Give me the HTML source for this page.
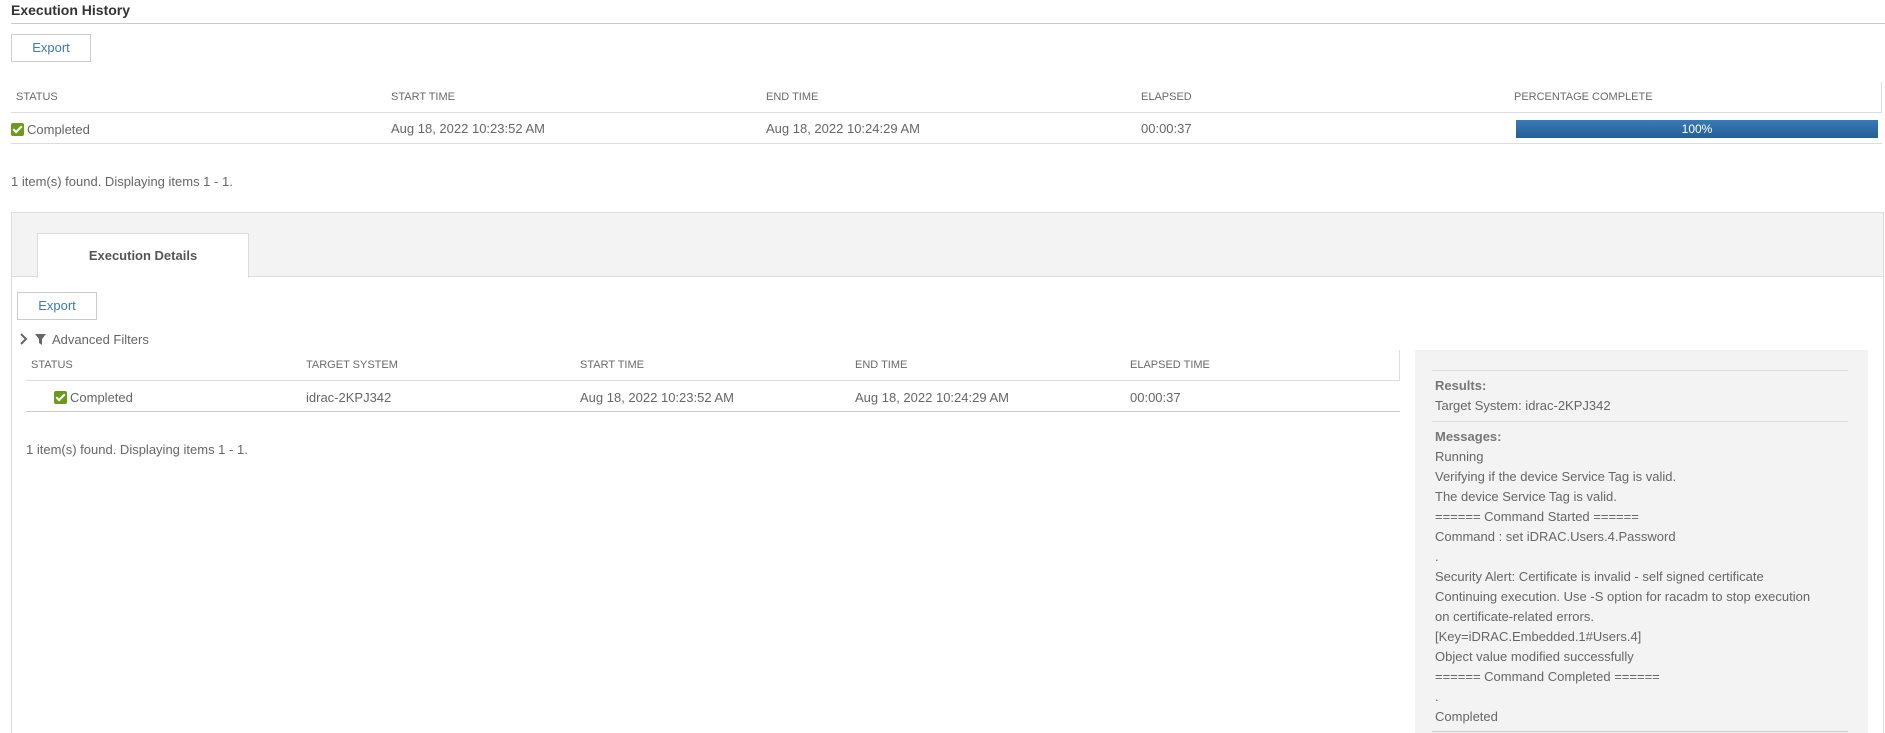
<!DOCTYPE html>
<html style="height:733px;overflow:hidden"><head><meta charset="utf-8"><style>
*{margin:0;padding:0;box-sizing:border-box}
body{width:1885px;height:733px;overflow:hidden;background:#fff;font-family:"Liberation Sans",sans-serif;color:#666;font-size:13px;position:relative}
.a{position:absolute;white-space:nowrap}
.h{font-size:11px;color:#6a6a6a;text-transform:uppercase}
.ln{position:absolute;height:1px;background:#ddd}
.btn{position:absolute;border:1px solid #ccc;background:#fff;color:#3d7bb0;font-size:13px;text-align:center}
.chk{display:inline-block;width:13px;height:13px;background:#6b9a1c;border-radius:2px;vertical-align:-2px;margin-right:3px;position:relative}
.chk:after{content:"";position:absolute;left:4px;top:1px;width:3px;height:7px;border:solid #fff;border-width:0 2px 2px 0;transform:rotate(45deg)}
.rp div{height:20px;line-height:20px}
</style></head><body>
<div class="a" style="left:11px;top:2px;font-size:14px;font-weight:bold;color:#333">Execution History</div>
<div class="ln" style="left:11px;top:23px;width:1874px;background:#ccc"></div>
<div class="btn" style="left:11px;top:34px;width:80px;height:28px;line-height:26px">Export</div>

<div class="a h" style="left:16px;top:91px">Status</div>
<div class="a h" style="left:391px;top:91px">Start Time</div>
<div class="a h" style="left:766px;top:91px">End Time</div>
<div class="a h" style="left:1141px;top:91px">Elapsed</div>
<div class="a h" style="left:1514px;top:91px">Percentage Complete</div>
<div style="position:absolute;left:1881px;top:82px;width:1px;height:31px;background:#ddd"></div>
<div class="ln" style="left:11px;top:112px;width:1871px"></div>
<div class="a" style="left:11px;top:122px"><span class="chk"></span>Completed</div>
<div class="a" style="left:391px;top:121px">Aug 18, 2022 10:23:52 AM</div>
<div class="a" style="left:766px;top:121px">Aug 18, 2022 10:24:29 AM</div>
<div class="a" style="left:1141px;top:121px">00:00:37</div>
<div class="a" style="left:1516px;top:120px;width:362px;height:18px;background:linear-gradient(#3a7ab8,#255f95);color:#fff;font-size:12px;text-align:center;line-height:19px">100%</div>
<div class="ln" style="left:11px;top:143px;width:1871px"></div>
<div class="a" style="left:11px;top:174px">1 item(s) found. Displaying items 1 - 1.</div>

<div style="position:absolute;left:11px;top:212px;width:1873px;height:521px;border:1px solid #ddd;border-bottom:none;background:#fff">
 <div style="height:64px;background:#f3f3f3;border-bottom:1px solid #ddd"></div>
</div>
<div style="position:absolute;left:37px;top:233px;width:212px;height:45px;background:#fff;border:1px solid #ddd;border-bottom:none;text-align:center;line-height:44px;font-size:13px;font-weight:bold;color:#555">Execution Details</div>
<div class="btn" style="left:17px;top:292px;width:80px;height:28px;line-height:26px">Export</div>
<svg class="a" style="left:19px;top:332px" width="30" height="14" viewBox="0 0 30 14"><path d="M2 2l5 5-5 5" fill="none" stroke="#666" stroke-width="2"/><path d="M16 2h11l-4 5v6l-3-2v-4z" fill="#666"/></svg>
<div class="a" style="left:52px;top:332px">Advanced Filters</div>

<div class="a h" style="left:31px;top:359px">Status</div>
<div class="a h" style="left:306px;top:359px">Target System</div>
<div class="a h" style="left:580px;top:359px">Start Time</div>
<div class="a h" style="left:855px;top:359px">End Time</div>
<div class="a h" style="left:1130px;top:359px">Elapsed Time</div>
<div style="position:absolute;left:1399px;top:350px;width:1px;height:31px;background:#ddd"></div>
<div class="ln" style="left:26px;top:380px;width:1374px"></div>
<div class="a" style="left:54px;top:390px"><span class="chk"></span>Completed</div>
<div class="a" style="left:306px;top:390px">idrac-2KPJ342</div>
<div class="a" style="left:580px;top:390px">Aug 18, 2022 10:23:52 AM</div>
<div class="a" style="left:855px;top:390px">Aug 18, 2022 10:24:29 AM</div>
<div class="a" style="left:1130px;top:390px">00:00:37</div>
<div class="ln" style="left:26px;top:411px;width:1374px;background:#ccc"></div>
<div class="a" style="left:26px;top:442px">1 item(s) found. Displaying items 1 - 1.</div>

<div style="position:absolute;left:1415px;top:350px;width:453px;height:383px;background:#f3f3f3"></div>
<div class="ln" style="left:1432px;top:370px;width:416px"></div>
<div class="ln" style="left:1432px;top:421px;width:416px"></div>
<div class="ln" style="left:1432px;top:731px;width:416px;background:#ccc"></div>
<div class="a rp" style="left:1435px;top:376px">
<div style="font-weight:bold;color:#777">Results:</div>
<div>Target System: idrac-2KPJ342</div>
<div style="height:11px"></div>
<div style="font-weight:bold;color:#777">Messages:</div>
<div>Running</div>
<div>Verifying if the device Service Tag is valid.</div>
<div>The device Service Tag is valid.</div>
<div>====== Command Started ======</div>
<div>Command : set iDRAC.Users.4.Password</div>
<div>.</div>
<div>Security Alert: Certificate is invalid - self signed certificate</div>
<div>Continuing execution. Use -S option for racadm to stop execution</div>
<div>on certificate-related errors.</div>
<div>[Key=iDRAC.Embedded.1#Users.4]</div>
<div>Object value modified successfully</div>
<div>====== Command Completed ======</div>
<div>.</div>
<div>Completed</div>
</div>
</body></html>
